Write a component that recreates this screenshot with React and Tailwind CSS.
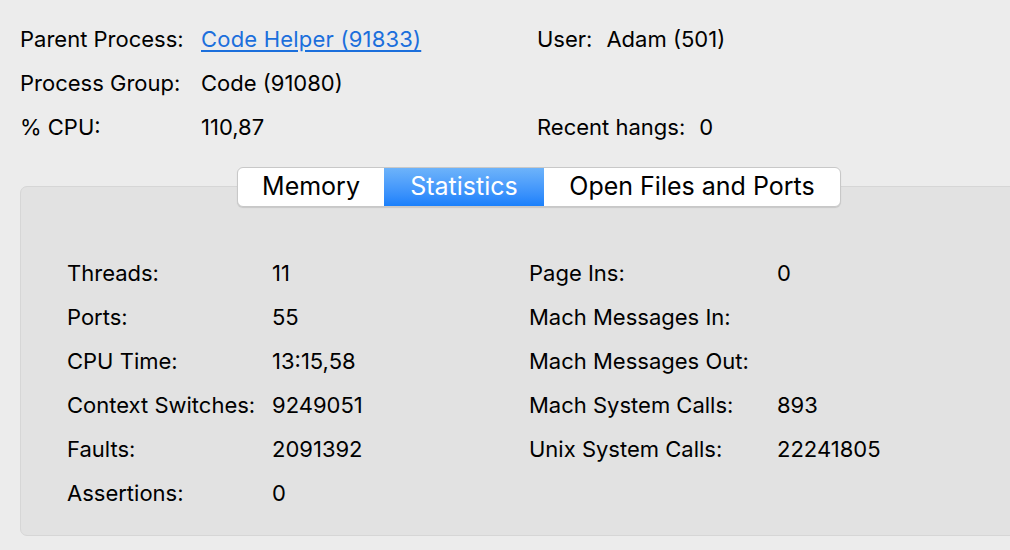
import React from "react";

const topRows = [
  { label: "Parent Process:", value: "Code Helper (91833)", link: true, right: ["User:", "Adam (501)"] },
  { label: "Process Group:", value: "Code (91080)" },
  { label: "% CPU:", value: "110,87", right: ["Recent hangs:", "0"] },
];

const leftStats = [
  ["Threads:", "11"],
  ["Ports:", "55"],
  ["CPU Time:", "13:15,58"],
  ["Context Switches:", "9249051"],
  ["Faults:", "2091392"],
  ["Assertions:", "0"],
];

const rightStats = [
  ["Page Ins:", "0"],
  ["Mach Messages In:", ""],
  ["Mach Messages Out:", ""],
  ["Mach System Calls:", "893"],
  ["Unix System Calls:", "22241805"],
];

export default function App() {
  return (
    <div
      className="w-[1010px] h-[550px] overflow-hidden bg-[#ececec] text-black text-[22px]"
      style={{ fontFamily: "Inter, 'Noto Sans', sans-serif" }}
    >
      <div className="pt-[17px] pl-[20px]">
        {topRows.map((row) => (
          <div key={row.label} className="flex items-center h-[44px]">
            <div className="w-[181px]">{row.label}</div>
            <div className="w-[336px]">
              {row.link ? (
                <span className="text-[#1b6fdc] underline underline-offset-[3px] tracking-[0.2px]">{row.value}</span>
              ) : (
                row.value
              )}
            </div>
            {row.right && (
              <div className="flex gap-[14px]">
                <span>{row.right[0]}</span>
                <span>{row.right[1]}</span>
              </div>
            )}
          </div>
        ))}
      </div>

      <div className="mt-[37px] ml-[20px] w-[1040px] h-[350px] bg-[#e2e2e2] border border-[#d6d6d6] rounded-[7px]">
        <div className="-mt-[20px] pl-[216px] flex">
          <div className="flex h-[40px] rounded-[6px] bg-white border border-[#c8c8c8] shadow-[0_1px_1px_rgba(0,0,0,0.12)] overflow-hidden text-[25px]">
            <div className="w-[146px] flex items-center justify-center">Memory</div>
            <div className="w-[160px] flex items-center justify-center text-white bg-gradient-to-b from-[#6db3fa] to-[#1a80fb]">
              Statistics
            </div>
            <div className="w-[296px] flex items-center justify-center">Open Files and Ports</div>
          </div>
        </div>

        <div className="mt-[44px] pl-[46px] flex">
          <div className="w-[462px]">
            {leftStats.map(([label, value]) => (
              <div key={label} className="flex items-center h-[44px]">
                <div className="w-[205px]">{label}</div>
                <div>{value}</div>
              </div>
            ))}
          </div>
          <div>
            {rightStats.map(([label, value]) => (
              <div key={label} className="flex items-center h-[44px]">
                <div className="w-[248px]">{label}</div>
                <div>{value}</div>
              </div>
            ))}
          </div>
        </div>
      </div>
    </div>
  );
}
